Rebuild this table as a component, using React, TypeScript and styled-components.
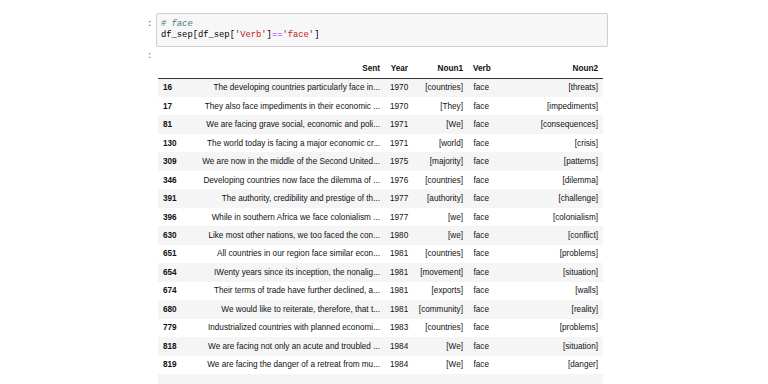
import React from "react";
import styled, { createGlobalStyle } from "styled-components";

const Global = createGlobalStyle`
  html, body { margin: 0; padding: 0; background: #ffffff; }
  body { font-family: "Liberation Sans", Arial, sans-serif; }
`;

const Page = styled.div`
  width: 768px;
  height: 384px;
  overflow: hidden;
  background: #ffffff;
`;

const Row = styled.div<{ $top: number }>`
  display: flex;
  align-items: flex-start;
  margin-left: 140px;
  margin-top: ${(p) => p.$top}px;
`;

const Prompt = styled.div<{ $color: string; $padTop: number }>`
  width: 16px;
  box-sizing: border-box;
  padding-top: ${(p) => p.$padTop}px;
  padding-left: 7px;
  font-family: "Liberation Mono", "Courier New", monospace;
  font-size: 8.8px;
  line-height: 11px;
  color: ${(p) => p.$color};
`;

const InputArea = styled.div`
  width: 452px;
  box-sizing: border-box;
  background: #f7f7f7;
  border: 1px solid #cfcfcf;
  border-radius: 2px;
  padding: 5px 4px;
  font-family: "Liberation Mono", "Courier New", monospace;
  font-size: 8.8px;
  line-height: 11px;
  color: #000;
  white-space: pre;
`;

const CodeLine = styled.div``;

const Tok = styled.span<{ $kind: "comment" | "string" | "op" | "plain" }>`
  color: ${(p) =>
    p.$kind === "comment"
      ? "#408080"
      : p.$kind === "string"
      ? "#ba2121"
      : p.$kind === "op"
      ? "#aa22ff"
      : "#000"};
  font-style: ${(p) => (p.$kind === "comment" ? "italic" : "normal")};
`;

const OutputArea = styled.div`
  padding-left: 2px;
  padding-top: 8px;
`;

const Table = styled.table`
  border-collapse: collapse;
  table-layout: fixed;
  width: 445px;
  font-family: "Liberation Sans", Arial, sans-serif;
  font-size: 8.2px;
  color: #111;
`;

const HeadCell = styled.th`
  height: 18.5px;
  padding: 0 5px;
  text-align: right;
  font-weight: bold;
  border-bottom: 1px solid #333;
  white-space: nowrap;
`;

const BodyRow = styled.tr<{ $striped: boolean }>`
  background: ${(p) => (p.$striped ? "#f5f5f5" : "#ffffff")};
`;

const IndexCell = styled.th`
  height: 18.47px;
  padding: 0 5px;
  text-align: left;
  font-weight: bold;
  white-space: nowrap;
`;

const Cell = styled.td`
  height: 18.47px;
  padding: 0 5px;
  text-align: right;
  white-space: nowrap;
  overflow: hidden;
`;

type Rec = [string, string, string, string, string, string];

const rows: Rec[] = [
  ["16", "The developing countries particularly face in...", "1970", "[countries]", "face", "[threats]"],
  ["17", "They also face impediments in their economic ...", "1970", "[They]", "face", "[impediments]"],
  ["81", "We are facing grave social, economic and poli...", "1971", "[We]", "face", "[consequences]"],
  ["130", "The world today is facing a major economic cr...", "1971", "[world]", "face", "[crisis]"],
  ["309", "We are now in the middle of the Second United...", "1975", "[majority]", "face", "[patterns]"],
  ["346", "Developing countries now face the dilemma of ...", "1976", "[countries]", "face", "[dilemma]"],
  ["391", "The authority, credibility and prestige of th...", "1977", "[authority]", "face", "[challenge]"],
  ["396", "While in southern Africa we face colonialism ...", "1977", "[we]", "face", "[colonialism]"],
  ["630", "Like most other nations, we too faced the con...", "1980", "[we]", "face", "[conflict]"],
  ["651", "All countries in our region face similar econ...", "1981", "[countries]", "face", "[problems]"],
  ["654", "IWenty years since its inception, the nonalig...", "1981", "[movement]", "face", "[situation]"],
  ["674", "Their terms of trade have further declined, a...", "1981", "[exports]", "face", "[walls]"],
  ["680", "We would like to reiterate, therefore, that t...", "1981", "[community]", "face", "[reality]"],
  ["779", "Industrialized countries with planned economi...", "1983", "[countries]", "face", "[problems]"],
  ["818", "We are facing not only an acute and troubled ...", "1984", "[We]", "face", "[situation]"],
  ["819", "We are facing the danger of a retreat from mu...", "1984", "[We]", "face", "[danger]"],
];

const widths = [38, 189, 28, 55, 26, 109];
const headers = ["", "Sent", "Year", "Noun1", "Verb", "Noun2"];

export default function App() {
  return (
    <Page>
      <Global />
      <Row $top={13}>
        <Prompt $color="#303f9f" $padTop={6}>:</Prompt>
        <InputArea>
          <CodeLine>
            <Tok $kind="comment"># face</Tok>
          </CodeLine>
          <CodeLine>
            <Tok $kind="plain">df_sep[df_sep[</Tok>
            <Tok $kind="string">'Verb'</Tok>
            <Tok $kind="plain">]</Tok>
            <Tok $kind="op">==</Tok>
            <Tok $kind="string">'face'</Tok>
            <Tok $kind="plain">]</Tok>
          </CodeLine>
        </InputArea>
      </Row>
      <Row $top={4}>
        <Prompt $color="#d84315" $padTop={0}>:</Prompt>
        <OutputArea>
          <Table>
            <colgroup>
              {widths.map((w, i) => (
                <col key={i} style={{ width: w }} />
              ))}
            </colgroup>
            <thead>
              <tr>
                {headers.map((h, i) => (
                  <HeadCell key={i}>{h}</HeadCell>
                ))}
              </tr>
            </thead>
            <tbody>
              {rows.map((r, i) => (
                <BodyRow key={r[0]} $striped={i % 2 === 0}>
                  <IndexCell>{r[0]}</IndexCell>
                  {r.slice(1).map((v, j) => (
                    <Cell key={j}>{v}</Cell>
                  ))}
                </BodyRow>
              ))}
              <BodyRow $striped={true}>
                <IndexCell />
                <Cell />
                <Cell />
                <Cell />
                <Cell />
                <Cell />
              </BodyRow>
            </tbody>
          </Table>
        </OutputArea>
      </Row>
    </Page>
  );
}
